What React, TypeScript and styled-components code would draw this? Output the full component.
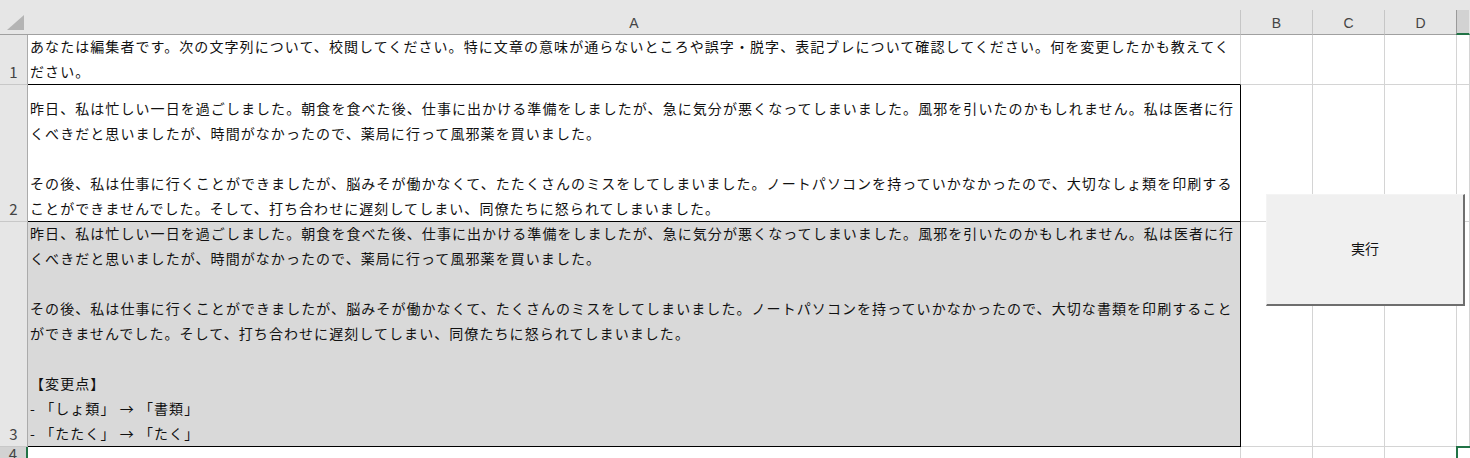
import React from 'react'
import styled, { createGlobalStyle } from 'styled-components'

const GlobalStyle = createGlobalStyle`
  html, body {
    margin: 0;
    padding: 0;
    background: #ffffff;
    overflow: hidden;
  }
`

const JP = `"Noto Sans CJK JP", "Noto Sans", sans-serif`

const Sheet = styled.div`
  position: relative;
  display: grid;
  grid-template-columns: 28px 1213px 72px 72px 72px 1fr;
  grid-template-rows: 10px 25px 50px 137px 225px 20px;
  width: 1470px;
  height: 458px;
  overflow: hidden;
  background: #ffffff;
  font-family: ${JP};
`

const Corner = styled.div`
  grid-row: 1 / span 2;
  grid-column: 1;
  position: relative;
  background: #e6e6e6;
  border-bottom: 1px solid #a0a0a0;
`

const CornerTriangle = styled.div`
  position: absolute;
  left: 7px;
  top: 15px;
  width: 0;
  height: 0;
  border-left: 17px solid transparent;
  border-bottom: 15px solid #b4b4b4;
`

const TopStrip = styled.div`
  grid-row: 1;
  grid-column: 2 / -1;
  background: #e6e6e6;
`

const ColHeader = styled.div<{ $selected?: boolean }>`
  display: flex;
  align-items: center;
  justify-content: center;
  background: ${p => (p.$selected ? '#d2d2d2' : '#e6e6e6')};
  border-right: 1px solid ${p => (p.$selected ? '#e6e6e6' : '#c6c6c6')};
  border-left: ${p => (p.$selected ? '1px solid #9a9a9a' : 'none')};
  border-bottom: ${p => (p.$selected ? '2px solid #217346' : '1px solid #a0a0a0')};
  margin-left: ${p => (p.$selected ? '-1px' : '0')};
  color: #444444;
  font-family: "Liberation Sans", Arial, sans-serif;
  font-size: 14px;
  padding-top: 1px;
`

const RowHeader = styled.div<{ $selected?: boolean }>`
  display: flex;
  align-items: flex-end;
  justify-content: center;
  background: ${p => (p.$selected ? '#d2d2d2' : '#e6e6e6')};
  border-right: ${p => (p.$selected ? '2px solid #217346' : '1px solid #ababab')};
  border-bottom: 1px solid #c8c8c8;
  color: #444444;
  font-family: ${JP};
  font-size: 15px;
  line-height: 25px;
`

const Cell = styled.div<{ $bg?: string; $boxRight?: boolean; $boxBottom?: boolean }>`
  display: flex;
  flex-direction: column;
  justify-content: flex-end;
  overflow: hidden;
  background: ${p => p.$bg || '#ffffff'};
  border-right: 1px solid ${p => (p.$boxRight ? '#000000' : '#d4d4d4')};
  border-bottom: 1px solid ${p => (p.$boxBottom ? '#000000' : '#d4d4d4')};
  padding-left: 2px;
  font-size: 14px;
  letter-spacing: 1.07px;
  line-height: 25px;
  color: #111111;
  white-space: nowrap;
`

const ActiveCell = styled.div`
  position: relative;
  background: #ffffff;
  border-bottom: 1px solid #d4d4d4;

  &::before {
    content: '';
    position: absolute;
    left: -1px;
    top: -1px;
    right: -4px;
    bottom: -4px;
    border-left: 2px solid #217346;
    border-top: 2px solid #217346;
  }
`

const Line = styled.div`
  height: 25px;
  flex-shrink: 0;
`

const RunButton = styled.button`
  position: absolute;
  left: 1266px;
  top: 194px;
  width: 199px;
  height: 112px;
  box-sizing: border-box;
  background: #f0f0f0;
  border: none;
  border-top: 1px solid #f4f4f4;
  border-left: 1px solid #f4f4f4;
  border-right: 2px solid #6e6e6e;
  border-bottom: 2px solid #6e6e6e;
  font-family: ${JP};
  font-size: 14px;
  color: #111111;
  padding: 0 0 3px 0;
  cursor: pointer;
`

const prompt = [
  'あなたは編集者です。次の文字列について、校閲してください。特に文章の意味が通らないところや誤字・脱字、表記ブレについて確認してください。何を変更したかも教えてく',
  'ださい。',
]

const original = [
  '昨日、私は忙しい一日を過ごしました。朝食を食べた後、仕事に出かける準備をしましたが、急に気分が悪くなってしまいました。風邪を引いたのかもしれません。私は医者に行',
  'くべきだと思いましたが、時間がなかったので、薬局に行って風邪薬を買いました。',
  '',
  'その後、私は仕事に行くことができましたが、脳みそが働かなくて、たたくさんのミスをしてしまいました。ノートパソコンを持っていかなかったので、大切なしょ類を印刷する',
  'ことができませんでした。そして、打ち合わせに遅刻してしまい、同僚たちに怒られてしまいました。',
]

const revised = [
  '昨日、私は忙しい一日を過ごしました。朝食を食べた後、仕事に出かける準備をしましたが、急に気分が悪くなってしまいました。風邪を引いたのかもしれません。私は医者に行',
  'くべきだと思いましたが、時間がなかったので、薬局に行って風邪薬を買いました。',
  '',
  'その後、私は仕事に行くことができましたが、脳みそが働かなくて、たくさんのミスをしてしまいました。ノートパソコンを持っていかなかったので、大切な書類を印刷すること',
  'ができませんでした。そして、打ち合わせに遅刻してしまい、同僚たちに怒られてしまいました。',
  '',
  '【変更点】',
  '- 「しょ類」 → 「書類」',
  '- 「たたく」 → 「たく」',
]

const Lines = ({ lines }: { lines: string[] }) => (
  <>
    {lines.map((l, i) => (
      <Line key={i}>{l || '\u00a0'}</Line>
    ))}
  </>
)

const EmptyRow = () => (
  <>
    <Cell />
    <Cell />
    <Cell />
    <Cell />
  </>
)

export default function App() {
  return (
    <>
      <GlobalStyle />
      <Sheet>
        <Corner>
          <CornerTriangle />
        </Corner>
        <TopStrip />

        <ColHeader>A</ColHeader>
        <ColHeader>B</ColHeader>
        <ColHeader>C</ColHeader>
        <ColHeader>D</ColHeader>
        <ColHeader $selected />

        <RowHeader>1</RowHeader>
        <Cell $boxBottom>
          <Lines lines={prompt} />
        </Cell>
        <EmptyRow />

        <RowHeader>2</RowHeader>
        <Cell $boxRight $boxBottom>
          <Lines lines={original} />
        </Cell>
        <EmptyRow />

        <RowHeader>3</RowHeader>
        <Cell $bg="#d9d9d9" $boxRight $boxBottom>
          <Lines lines={revised} />
        </Cell>
        <EmptyRow />

        <RowHeader $selected>4</RowHeader>
        <Cell />
        <Cell />
        <Cell />
        <Cell />
        <ActiveCell />

        <RunButton>実行</RunButton>
      </Sheet>
    </>
  )
}
